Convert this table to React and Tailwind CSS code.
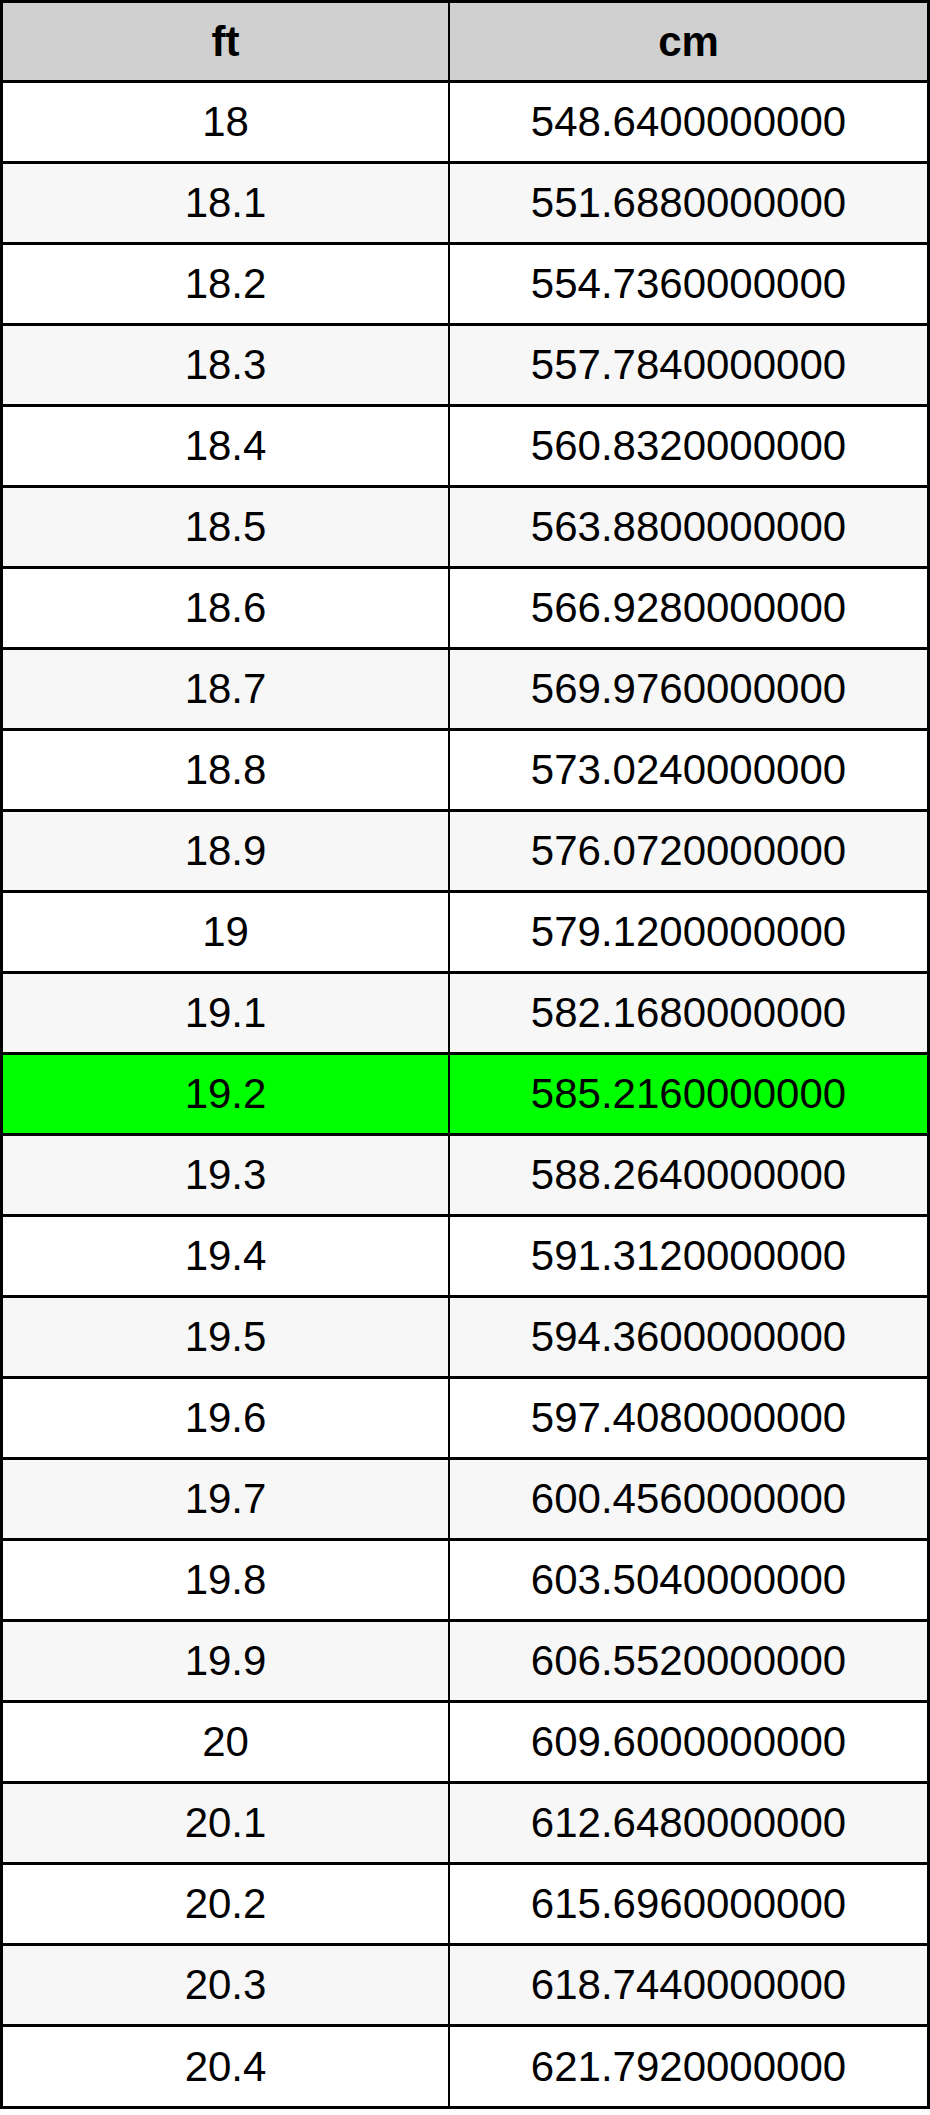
const START = 18;
const FT_TO_CM = 30.48;

// 18.0 .. 20.4 ft in 0.1 steps
const ROWS = Array.from({ length: 25 }, (_, i) => {
  const tenths = START * 10 + i;
  const ft = tenths % 10 === 0 ? String(tenths / 10) : (tenths / 10).toFixed(1);
  const cm = ((tenths * FT_TO_CM) / 10).toFixed(10);
  return { ft, cm, highlight: ft === '19.2' };
});

const Row = ({ left, right, className, last }) => (
  <div className={`flex ${last ? 'h-[79px]' : 'h-[81px] border-b-[3px] border-black'} ${className}`}>
    <div className="w-[447px] flex items-center justify-center border-r-[2px] border-black">{left}</div>
    <div className="flex-1 flex items-center justify-center">{right}</div>
  </div>
);

const App = () => {
  return (
    <div className="w-[930px] bg-white" style={{ fontFamily: '"Liberation Sans", Arial, sans-serif' }}>
      <div className="border-[3px] border-black text-[42px] leading-none text-black">
        {/* ── Header ── */}
        <Row left="ft" right="cm" className="bg-[#d0d0d0] font-bold !h-[80px]" />

        {/* ── Body ── */}
        {ROWS.map((r, i) => (
          <Row
            key={r.ft}
            left={r.ft}
            right={r.cm}
            last={i === ROWS.length - 1}
            className={r.highlight ? 'bg-[#00ff00]' : i % 2 === 1 ? 'bg-[#f7f7f7]' : 'bg-white'}
          />
        ))}
      </div>
    </div>
  );
};

export default App;
